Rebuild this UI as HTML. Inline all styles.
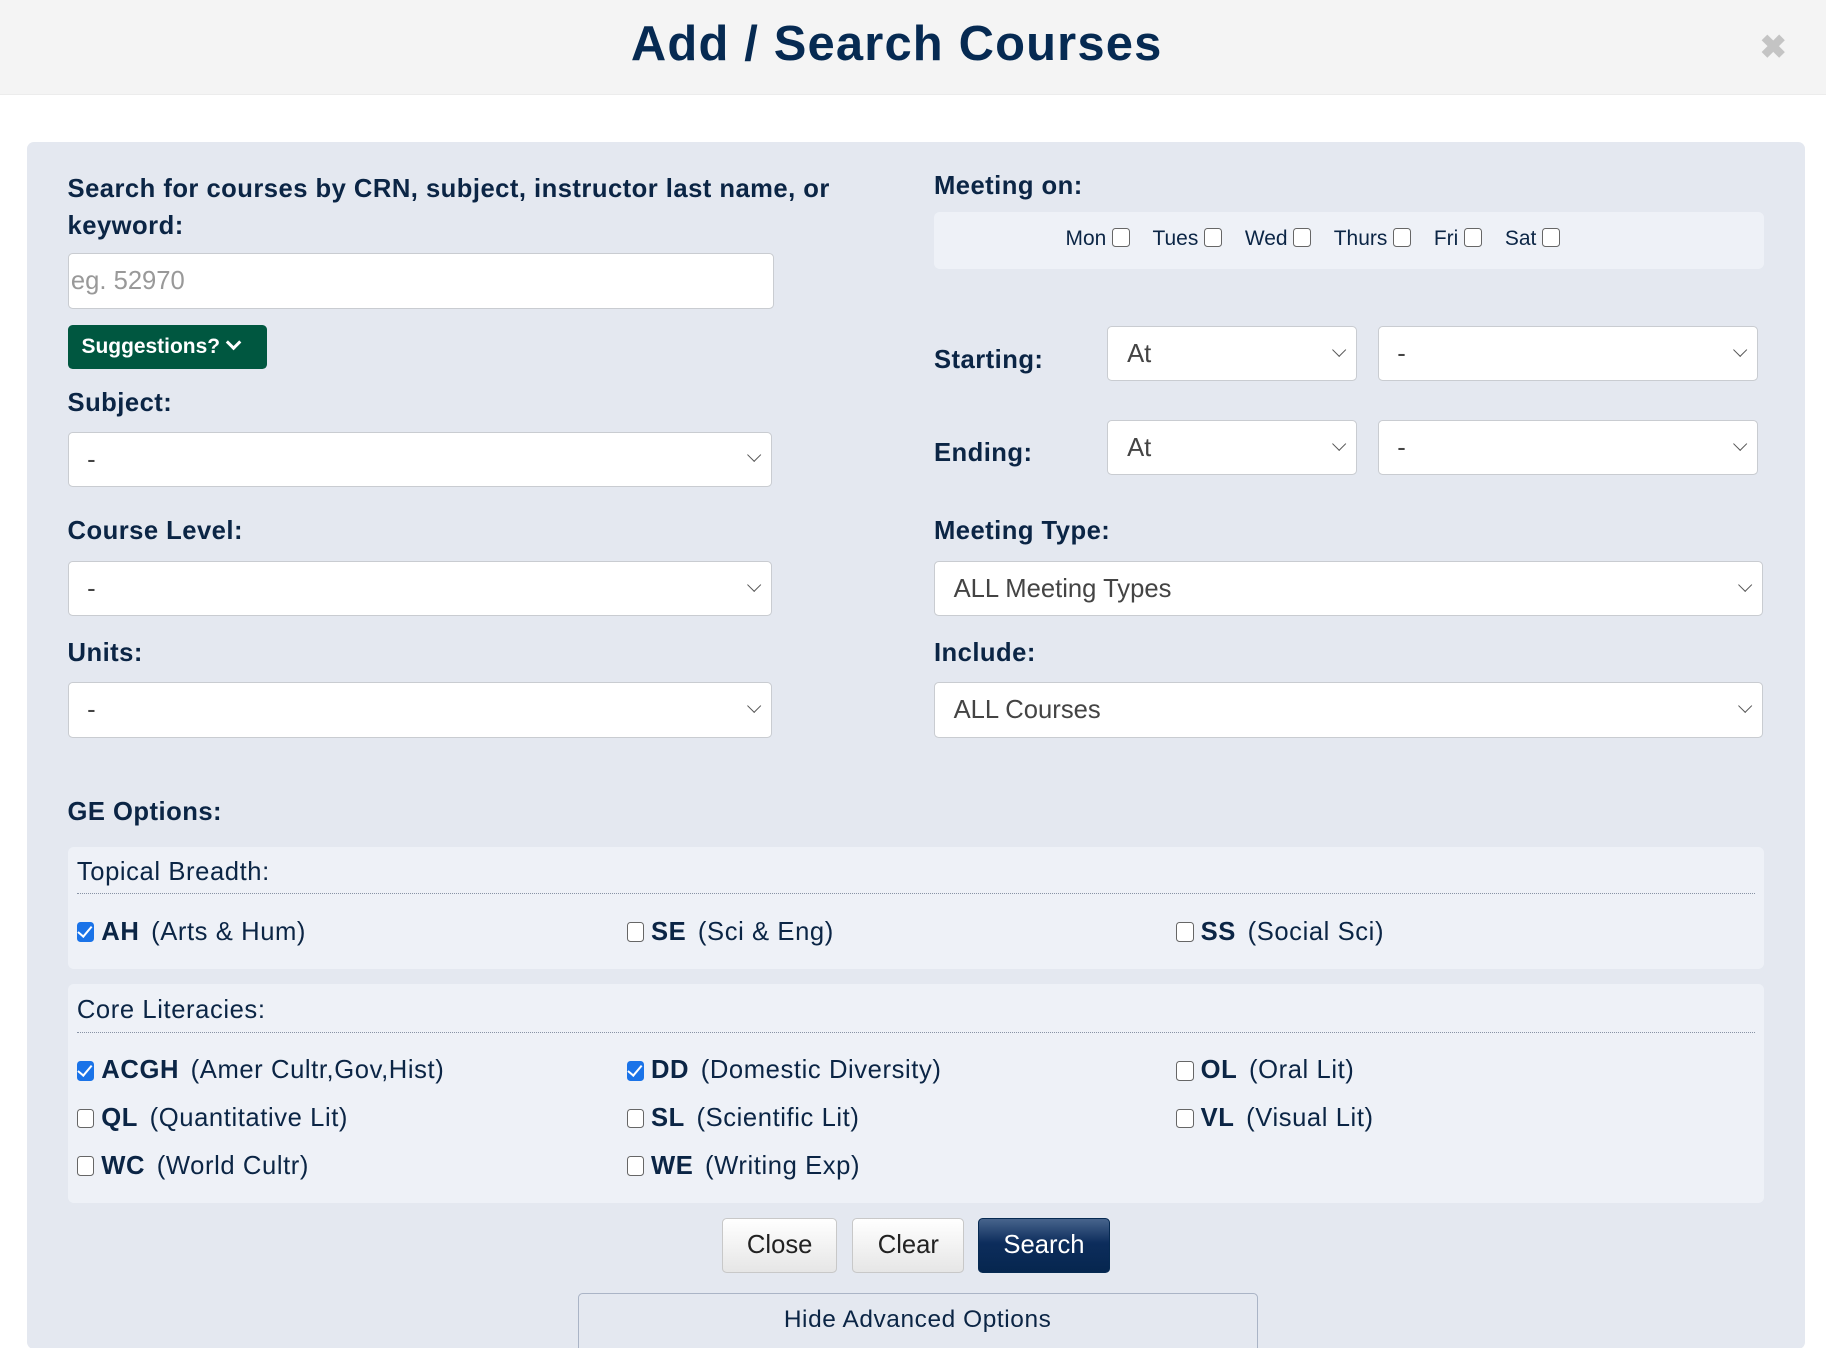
<!DOCTYPE html>
<html><head><meta charset="utf-8"><style>
html,body{margin:0;padding:0;background:#fff;width:1826px;height:1348px;overflow:hidden}
#w{position:relative;width:1568px;height:1158px;zoom:1.16454;font-family:"Liberation Sans",sans-serif;color:#0b2545}
.a{position:absolute}
.hdr{left:0;top:0;width:1568px;height:81px;background:#f4f4f4;border-bottom:1px solid #ececec}
.title{left:0;width:1540px;top:14px;text-align:center;font-size:42px;font-weight:bold;color:#062a52;letter-spacing:1px}
.x{left:1511px;top:24px;font-size:28px;color:#c4c4c4;font-weight:bold}
.panel{left:23px;top:122px;width:1527px;height:1036px;background:#e4e8f0;border-radius:6px}
.lbl{font-size:22px;font-weight:bold;color:#0b2545;letter-spacing:.4px}
.inp{background:#fff;border:1px solid #c9ccd1;border-radius:4px;box-sizing:border-box;font-size:22px;color:#444}
.sel span{position:absolute;left:16px;top:11px}
.sel i{position:absolute;right:10px;top:15px;width:8px;height:8px;border-right:1.5px solid #555;border-bottom:1.5px solid #555;transform:rotate(45deg)}
.sug{left:58px;top:279px;width:171px;height:38px;background:#005740;border-radius:4px;color:#fff;font-weight:bold;font-size:18px;line-height:38px;text-indent:12px}
.days{left:802px;top:182px;width:713px;height:49px;background:#eef1f7;border-radius:5px;font-size:18px;color:#0b2545}
.cb{display:inline-block;width:15px;height:17px;border:1.5px solid #666;border-radius:3px;vertical-align:-2px;background:#fff;box-sizing:border-box}
.cb.on{background:#1a73e8;border-color:#1a73e8;position:relative}
.cb.on:after{content:"";position:absolute;left:3px;top:0px;width:5px;height:10px;border-right:2px solid #fff;border-bottom:2px solid #fff;transform:rotate(40deg)}
.box{background:#eef1f7;border-radius:5px}
.bt{font-size:22px;color:#0b2545;letter-spacing:.5px}
.line{border-top:1px dotted #8893a5}
.it{font-size:22px;color:#0b2545;letter-spacing:.5px;white-space:nowrap}
.it b{margin:0 10px 0 6px}
.btn{top:1046px;height:47px;border-radius:4px;font-size:22px;line-height:46px;text-align:center;box-sizing:border-box}
.g{background:linear-gradient(#fff,#e6e6e6);border:1px solid #c8c8c8;color:#222}
</style></head><body><div id="w">
<div class="a hdr"></div>
<div class="a title">Add / Search Courses</div>
<div class="a x">✖</div>
<div class="a panel"></div>

<div class="a lbl" style="left:58px;top:147px;line-height:32px;width:720px">Search for courses by CRN, subject, instructor last name, or keyword:</div>
<div class="a inp" style="left:58px;top:217px;width:607px;height:48px;color:#999;padding:11px 2px">eg. 52970</div>
<div class="a sug">Suggestions? <span style="display:inline-block;width:7px;height:7px;border-right:3px solid #fff;border-bottom:3px solid #fff;transform:rotate(45deg);margin:0 0 4px 2px;text-indent:0"></span></div>
<div class="a lbl" style="left:58px;top:334px">Subject:</div>
<div class="a inp sel" style="left:58px;top:371px;width:605px;height:47px"><span>-</span><i></i></div>
<div class="a lbl" style="left:58px;top:444px">Course Level:</div>
<div class="a inp sel" style="left:58px;top:482px;width:605px;height:47px"><span>-</span><i></i></div>
<div class="a lbl" style="left:58px;top:549px">Units:</div>
<div class="a inp sel" style="left:58px;top:586px;width:605px;height:48px"><span>-</span><i></i></div>

<div class="a lbl" style="left:802px;top:148px">Meeting on:</div>
<div class="a days"><div style="position:absolute;left:113px;top:13px;white-space:nowrap">Mon <span class="cb"></span>&nbsp;&nbsp;&nbsp; Tues <span class="cb"></span>&nbsp;&nbsp;&nbsp; Wed <span class="cb"></span>&nbsp;&nbsp;&nbsp; Thurs <span class="cb"></span>&nbsp;&nbsp;&nbsp; Fri <span class="cb"></span>&nbsp;&nbsp;&nbsp; Sat <span class="cb"></span></div></div>
<div class="a lbl" style="left:802px;top:297px">Starting:</div>
<div class="a inp sel" style="left:951px;top:280px;width:214px;height:47px"><span>At</span><i></i></div>
<div class="a inp sel" style="left:1183px;top:280px;width:327px;height:47px"><span>-</span><i></i></div>
<div class="a lbl" style="left:802px;top:377px">Ending:</div>
<div class="a inp sel" style="left:951px;top:361px;width:214px;height:47px"><span>At</span><i></i></div>
<div class="a inp sel" style="left:1183px;top:361px;width:327px;height:47px"><span>-</span><i></i></div>
<div class="a lbl" style="left:802px;top:444px">Meeting Type:</div>
<div class="a inp sel" style="left:802px;top:482px;width:712px;height:47px"><span>ALL Meeting Types</span><i></i></div>
<div class="a lbl" style="left:802px;top:549px">Include:</div>
<div class="a inp sel" style="left:802px;top:586px;width:712px;height:48px"><span>ALL Courses</span><i></i></div>

<div class="a lbl" style="left:58px;top:685px">GE Options:</div>
<div class="a box" style="left:58px;top:727px;width:1457px;height:105px"></div>
<div class="a bt" style="left:66px;top:737px">Topical Breadth:</div>
<div class="a line" style="left:66px;top:767px;width:1441px"></div>
<div class="a it" style="left:66px;top:788px"><span class="cb on"></span><b>AH</b>(Arts &amp; Hum)</div>
<div class="a it" style="left:538px;top:788px"><span class="cb"></span><b>SE</b>(Sci &amp; Eng)</div>
<div class="a it" style="left:1010px;top:788px"><span class="cb"></span><b>SS</b>(Social Sci)</div>

<div class="a box" style="left:58px;top:845px;width:1457px;height:188px"></div>
<div class="a bt" style="left:66px;top:855px">Core Literacies:</div>
<div class="a line" style="left:66px;top:886px;width:1441px"></div>
<div class="a it" style="left:66px;top:907px"><span class="cb on"></span><b>ACGH</b>(Amer Cultr,Gov,Hist)</div>
<div class="a it" style="left:538px;top:907px"><span class="cb on"></span><b>DD</b>(Domestic Diversity)</div>
<div class="a it" style="left:1010px;top:907px"><span class="cb"></span><b>OL</b>(Oral Lit)</div>
<div class="a it" style="left:66px;top:948px"><span class="cb"></span><b>QL</b>(Quantitative Lit)</div>
<div class="a it" style="left:538px;top:948px"><span class="cb"></span><b>SL</b>(Scientific Lit)</div>
<div class="a it" style="left:1010px;top:948px"><span class="cb"></span><b>VL</b>(Visual Lit)</div>
<div class="a it" style="left:66px;top:989px"><span class="cb"></span><b>WC</b>(World Cultr)</div>
<div class="a it" style="left:538px;top:989px"><span class="cb"></span><b>WE</b>(Writing Exp)</div>

<div class="a btn g" style="left:620px;width:99px">Close</div>
<div class="a btn g" style="left:732px;width:96px">Clear</div>
<div class="a btn" style="left:840px;width:113px;background:linear-gradient(#47648c,#0d2d5c 45%,#06264f);color:#fff;border:1px solid #062a52">Search</div>
<div class="a" style="left:496px;top:1110px;width:584px;height:60px;border:1px solid #aab4c6;border-radius:4px 4px 0 0;background:#e4e8f0;box-sizing:border-box;text-align:center;font-size:21px;line-height:44px;color:#0b2545;letter-spacing:.5px">Hide Advanced Options</div>
</div></body></html>
